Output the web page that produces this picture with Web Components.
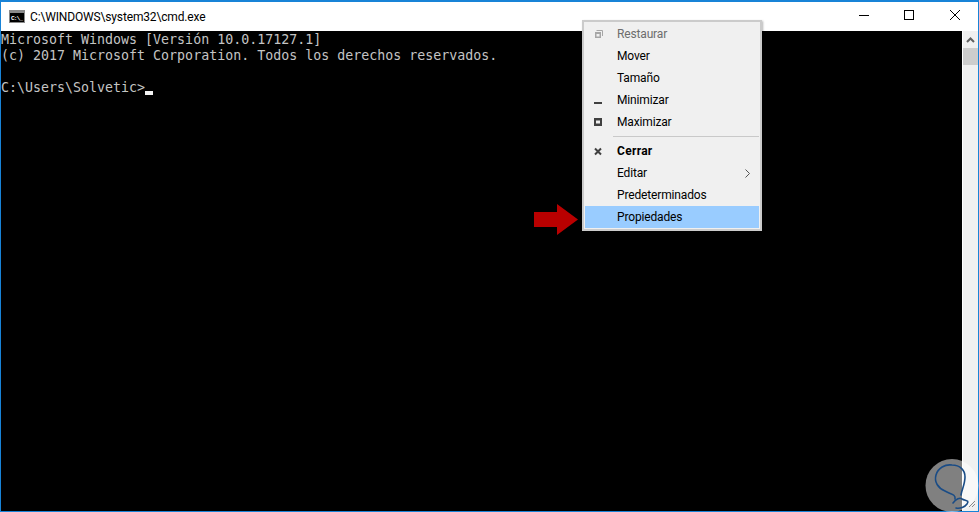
<!DOCTYPE html>
<html lang="es">
<head>
<meta charset="utf-8">
<title>cmd.exe</title>
<style>
    html, body { margin: 0; height: 100%; background: #fff; overflow: hidden; }
</style>
</head>
<body>
<cmd-window title="C:\WINDOWS\system32\cmd.exe">
    <console-view>
        <div>Microsoft Windows [Versión 10.0.17127.1]</div>
        <div>(c) 2017 Microsoft Corporation. Todos los derechos reservados.</div>
        <div>&nbsp;</div>
        <div prompt>C:\Users\Solvetic&gt;<console-cursor></console-cursor></div>
    </console-view>
</cmd-window>
<system-menu>
    <menu-item icon="restore" disabled>Restaurar</menu-item>
    <menu-item>Mover</menu-item>
    <menu-item>Tamaño</menu-item>
    <menu-item icon="minimize">Minimizar</menu-item>
    <menu-item icon="maximize">Maximizar</menu-item>
    <menu-separator></menu-separator>
    <menu-item icon="close" bold>Cerrar</menu-item>
    <menu-item submenu>Editar</menu-item>
    <menu-item>Predeterminados</menu-item>
    <menu-item active>Propiedades</menu-item>
</system-menu>
<red-arrow></red-arrow>
<brand-mark></brand-mark>

<script>
const UI_FONT = 'Roboto, "Noto Sans", sans-serif';

class CmdWindow extends HTMLElement {
    constructor() {
        super();
        this.attachShadow({ mode: 'open' });
    }

    connectedCallback() {
        const title = this.getAttribute('title') || '';
        this.shadowRoot.innerHTML = `
            <style>
                :host {
                    display: flex;
                    flex-direction: column;
                    box-sizing: border-box;
                    width: 979px;
                    height: 512px;
                    border: 1px solid #1883d7;
                    border-top-width: 2px;
                    background: #fff;
                }
                .bar {
                    display: flex;
                    align-items: center;
                    height: 29px;
                    padding-left: 8px;
                    font: 12px ${UI_FONT};
                    color: #000;
                }
                .icon { width: 16px; height: 13px; margin-right: 5px; }
                .name { flex: 1; letter-spacing: -0.15px; }
                .ctl { display: flex; }
                .ctl div { width: 46px; height: 26px; padding-bottom: 3px; display: flex; align-items: center; justify-content: center; }
                .ctl div:first-child { width: 44px; }
                .ctl svg { width: 10px; height: 10px; }
                .body { flex: 1; display: flex; min-height: 0; }
                .track {
                    width: 15px;
                    margin-left: 1px;
                    background: #f0f0f0;
                    display: flex;
                    flex-direction: column;
                    align-items: center;
                }
                .track svg { width: 9px; height: 6px; margin-top: 6px; }
                .thumb { width: 15px; height: 17px; margin-top: 5px; background: #cdcdcd; }
            </style>
            <div class="bar">
                <svg class="icon" viewBox="0 0 16 13">
                    <rect width="16" height="13" fill="#8a8a8a"/>
                    <rect x="1" y="3" width="14" height="9" fill="#000"/>
                    <text x="2" y="10" font-family="Liberation Mono" font-weight="bold" font-size="6.2" fill="#fff" textLength="12">C:\\_</text>
                </svg>
                <span class="name">${title}</span>
                <div class="ctl">
                    <div><svg viewBox="0 0 10 10"><rect y="5" width="10" height="1" fill="#000"/></svg></div>
                    <div><svg viewBox="0 0 10 10"><rect x=".5" y=".5" width="9" height="9" fill="none" stroke="#000"/></svg></div>
                    <div><svg viewBox="0 0 10 10"><path d="M0 0L10 10M10 0L0 10" stroke="#000" stroke-width="1" fill="none"/></svg></div>
                </div>
            </div>
            <div class="body">
                <slot></slot>
                <div class="track">
                    <svg viewBox="0 0 9 6"><path d="M1 5L4.5 1.5L8 5" fill="none" stroke="#606060" stroke-width="2"/></svg>
                    <div class="thumb"></div>
                </div>
            </div>
        `;
    }
}

class ConsoleView extends HTMLElement {
    constructor() {
        super();
        this.attachShadow({ mode: 'open' });
    }

    connectedCallback() {
        this.shadowRoot.innerHTML = `
            <style>
                :host {
                    display: block;
                    flex: 1;
                    padding-top: 1px;
                    background: #000;
                    color: #c4c4c4;
                    font: 13.3px/16px "DejaVu Sans Mono", monospace;
                    white-space: nowrap;
                    overflow: hidden;
                }
                ::slotted(div[prompt]) { display: flex; align-items: flex-end; }
            </style>
            <slot></slot>
        `;
    }
}

class ConsoleCursor extends HTMLElement {
    constructor() {
        super();
        this.attachShadow({ mode: 'open' }).innerHTML = `
            <style>
                :host { display: block; width: 8px; height: 4px; margin-bottom: 1px; background: #f2f2f2; }
            </style>
        `;
    }
}

class SystemMenu extends HTMLElement {
    constructor() {
        super();
        this.attachShadow({ mode: 'open' });
    }

    connectedCallback() {
        this.shadowRoot.innerHTML = `
            <style>
                :host {
                    position: absolute;
                    left: 582px;
                    top: 20px;
                    box-sizing: border-box;
                    width: 180px;
                    display: flex;
                    flex-direction: column;
                    padding: 1px;
                    background: #f0f0f0;
                    border: 2px solid #cbcbcb;
                    box-shadow: 1px 1px 2px rgba(0, 0, 0, 0.3);
                    font: 12px ${UI_FONT};
                    letter-spacing: -0.15px;
                    color: #000;
                }
            </style>
            <slot></slot>
        `;
    }
}

const MENU_ICONS = {
    restore: '<path d="M2 3h6v6H2z" fill="#a6a6a6"/><path d="M3.5 5h3v2.5h-3z" fill="#f0f0f0"/><path d="M3.5 1.5H9.5V7" fill="none" stroke="#a6a6a6"/>',
    minimize: '<rect x="1" y="7" width="8" height="2" fill="#404040"/>',
    maximize: '<path d="M1 1h8v8H1z" fill="#404040"/><rect x="3" y="3.5" width="4" height="3" fill="#f0f0f0"/>',
    close: '<path d="M2 2.5L8 8.5M8 2.5L2 8.5" stroke="#404040" stroke-width="2" fill="none"/>'
};

class MenuItem extends HTMLElement {
    constructor() {
        super();
        this.attachShadow({ mode: 'open' });
    }

    connectedCallback() {
        const icon = MENU_ICONS[this.getAttribute('icon')] || '';
        const arrow = this.hasAttribute('submenu')
            ? '<svg class="arrow" viewBox="0 0 5 9"><path d="M.5 .5L4.5 4.5L.5 8.5" fill="none" stroke="#555" stroke-width="1"/></svg>'
            : '';
        this.shadowRoot.innerHTML = `
            <style>
                :host {
                    display: flex;
                    align-items: center;
                    height: 22px;
                    line-height: 22px;
                }
                :host([disabled]) { color: #6d6d6d; }
                :host([bold]) { font-weight: 700; letter-spacing: 0.3px; }
                :host([active]) { background: #99ccff; }
                .gutter { width: 32px; display: flex; justify-content: flex-start; padding-left: 8px; box-sizing: border-box; }
                .gutter svg { width: 10px; height: 10px; }
                .label { flex: 1; }
                .arrow { width: 5px; height: 9px; margin-right: 9px; }
            </style>
            <div class="gutter"><svg viewBox="0 0 10 10">${icon}</svg></div>
            <span class="label"><slot></slot></span>
            ${arrow}
        `;
    }
}

class MenuSeparator extends HTMLElement {
    constructor() {
        super();
        this.attachShadow({ mode: 'open' }).innerHTML = `
            <style>
                :host { display: block; height: 1px; margin: 3px 0 3px 28px; background: #c9c9c9; }
            </style>
        `;
    }
}

class RedArrow extends HTMLElement {
    constructor() {
        super();
        this.attachShadow({ mode: 'open' }).innerHTML = `
            <style>
                :host { position: absolute; left: 533px; top: 204px; width: 46px; height: 31px; }
                svg { display: block; }
            </style>
            <svg width="46" height="31" viewBox="0 0 46 31">
                <path d="M1 8H24V0L45 15.5L24 31V23H1Z" fill="#b90000"/>
            </svg>
        `;
    }
}

class BrandMark extends HTMLElement {
    constructor() {
        super();
        this.attachShadow({ mode: 'open' }).innerHTML = `
            <style>
                :host { position: absolute; left: 925px; top: 458px; width: 54px; height: 54px; }
                svg { display: block; }
            </style>
            <svg width="54" height="54" viewBox="925 458 54 54">
                <circle cx="952" cy="485.5" r="26.5" fill="#fff" fill-opacity="0.5"/>
                <path d="M955 499C956 494 950 494 945 491C938 488 934 482 936 475C938 468 945 464 952 465C960 465 965 470 965 477C965 484 962 489 961 495"
                      fill="none" stroke="#1a4c86" stroke-width="1.6" stroke-linecap="round"/>
                <path d="M953 503C956 499 960 497 962 499C965 501 970 500 967 504C965 507 960 509 956 508"
                      fill="none" stroke="#1a4c86" stroke-width="1.6" stroke-linecap="round"/>
                <path d="M969 507L975 501M972 507L975 504" stroke="#8a8a8a" stroke-width="1" fill="none"/>
            </svg>
        `;
    }
}

customElements.define('cmd-window', CmdWindow);
customElements.define('console-view', ConsoleView);
customElements.define('console-cursor', ConsoleCursor);
customElements.define('system-menu', SystemMenu);
customElements.define('menu-item', MenuItem);
customElements.define('menu-separator', MenuSeparator);
customElements.define('red-arrow', RedArrow);
customElements.define('brand-mark', BrandMark);
</script>
</body>
</html>
